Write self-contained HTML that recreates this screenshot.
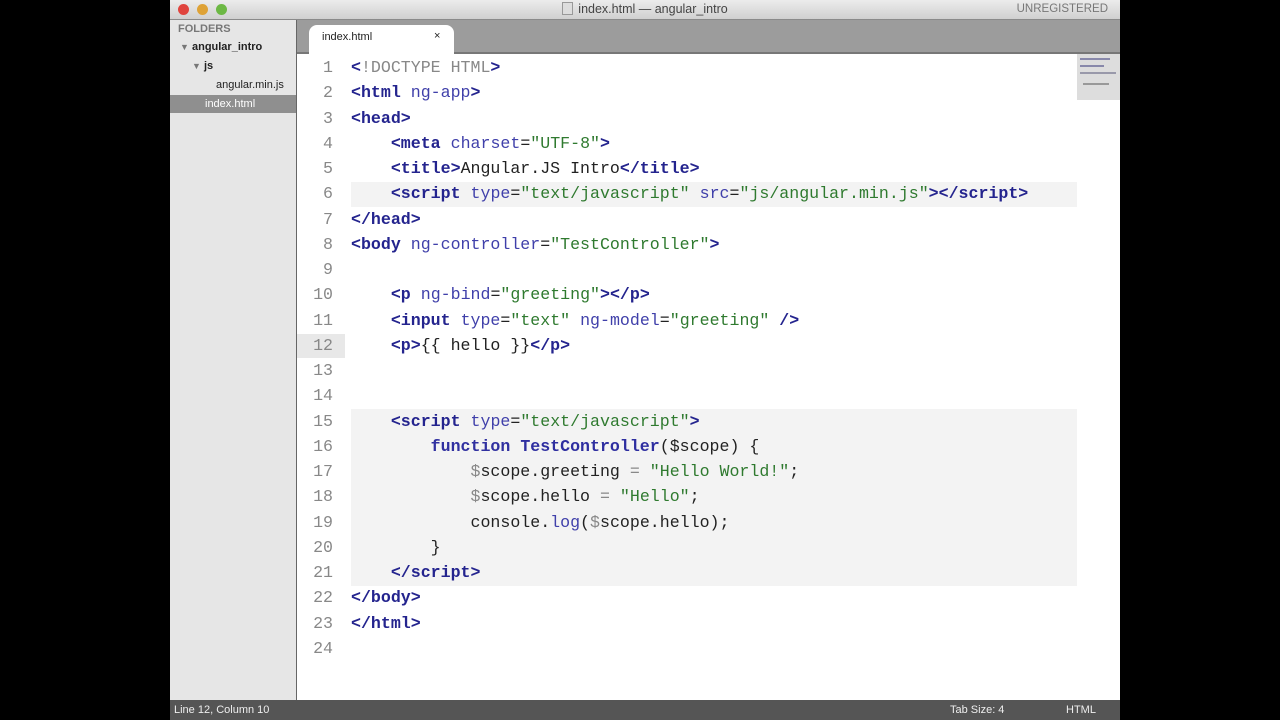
<!DOCTYPE html>
<html><head><style>
body{margin:0;width:1280px;height:720px;background:#000;position:relative;overflow:hidden;font-family:"Liberation Sans",sans-serif}
.win{position:absolute;left:170px;top:0;width:950px;height:720px;background:#fff;overflow:hidden}
.title{position:absolute;left:0;top:0;width:950px;height:19px;background:linear-gradient(#ececec,#d0d0d0);border-bottom:1px solid #8a8a8a;font-size:12.5px;color:#444;text-align:center;line-height:19px}
.dot{position:absolute;top:4px;width:11px;height:11px;border-radius:50%}
.side{position:absolute;left:0;top:20px;width:126px;height:680px;background:#e6e6e6;border-right:1px solid #666;font-size:11px;color:#222}
.side div{position:absolute;white-space:nowrap}
.tabbar{position:absolute;left:127px;top:20px;width:823px;height:32px;background:#9c9c9c;border-bottom:2px solid #777}
.tab{position:absolute;left:12px;top:5px;width:145px;height:29px;background:#fff;border-radius:8px 8px 0 0;font-size:11px;color:#222}
.code{position:absolute;left:127px;top:55px;width:823px;height:645px;font-family:"Liberation Mono",monospace;font-size:16.6px}
.ln{position:absolute;left:0;width:36px;text-align:right;color:#888;height:25.26px;line-height:25.26px}
.tx{position:absolute;left:54px;white-space:pre;height:25.26px;line-height:25.26px;color:#222}
.t{color:#24248e;font-weight:bold}.a{color:#4040aa}.s{color:#2f7a2f}.k{color:#3030a0;font-weight:bold}.f{color:#2e2ea0;font-weight:bold}.o{color:#888}
.status{position:absolute;left:0;top:700px;width:950px;height:20px;background:#555;color:#eee;font-size:11px;line-height:20px}
</style></head><body>
<div class="win">
<div class="title"><span class="dot" style="left:8px;background:#e0443e"></span><span class="dot" style="left:27px;background:#dea236"></span><span class="dot" style="left:46px;background:#6cb844"></span>
<span style="display:inline-block;width:9px;height:11px;background:#ddd;border:1px solid #999;vertical-align:-2px;margin-right:5px"></span>index.html — angular_intro
<span style="position:absolute;right:12px;top:0;color:#777;font-size:11.5px">UNREGISTERED</span></div>
<div class="side">
<div style="left:8px;top:3px;color:#777;font-weight:bold;font-size:11px">FOLDERS</div>
<div style="left:10px;top:21px;font-weight:bold"><span style="color:#777;font-size:9px">▼</span> angular_intro</div>
<div style="left:22px;top:40px;font-weight:bold"><span style="color:#777;font-size:9px">▼</span> js</div>
<div style="left:46px;top:59px">angular.min.js</div>
<div style="left:0;top:75px;width:126px;height:18px;background:#8f8f8f;color:#fff;line-height:18px;padding-left:35px;box-sizing:border-box">index.html</div>
</div>
<div class="tabbar"><div class="tab"><span style="position:absolute;left:13px;top:6px">index.html</span><span style="position:absolute;left:125px;top:5px">×</span></div></div>
<div class="code">
<div style="position:absolute;left:54px;top:127px;width:726px;height:25px;background:#f3f3f3"></div>
<div style="position:absolute;left:0;top:279px;width:48px;height:24px;background:#e8e8e8"></div>
<div style="position:absolute;left:54px;top:354px;width:726px;height:177px;background:#f3f3f3"></div>
<div style="position:absolute;left:780px;top:-1px;width:43px;height:46px;background:#ddd"></div>
<div style="position:absolute;left:783px;top:3px;width:30px;height:2px;background:#88a"></div>
<div style="position:absolute;left:783px;top:10px;width:24px;height:2px;background:#88a"></div>
<div style="position:absolute;left:783px;top:17px;width:36px;height:2px;background:#99a"></div>
<div style="position:absolute;left:786px;top:28px;width:26px;height:2px;background:#999"></div>
<div id="c"></div>
</div>
<div class="status"><span style="position:absolute;left:4px">Line 12, Column 10</span><span style="position:absolute;left:780px">Tab Size: 4</span><span style="position:absolute;left:896px">HTML</span></div>
</div>
<script>
var L=[
'<span class="t">&lt;</span><span class="o">!DOCTYPE HTML</span><span class="t">&gt;</span>',
'<span class="t">&lt;html</span> <span class="a">ng-app</span><span class="t">&gt;</span>',
'<span class="t">&lt;head&gt;</span>',
'    <span class="t">&lt;meta</span> <span class="a">charset</span>=<span class="s">"UTF-8"</span><span class="t">&gt;</span>',
'    <span class="t">&lt;title&gt;</span>Angular.JS Intro<span class="t">&lt;/title&gt;</span>',
'    <span class="t">&lt;script</span> <span class="a">type</span>=<span class="s">"text/javascript"</span> <span class="a">src</span>=<span class="s">"js/angular.min.js"</span><span class="t">&gt;&lt;/script&gt;</span>',
'<span class="t">&lt;/head&gt;</span>',
'<span class="t">&lt;body</span> <span class="a">ng-controller</span>=<span class="s">"TestController"</span><span class="t">&gt;</span>',
'',
'    <span class="t">&lt;p</span> <span class="a">ng-bind</span>=<span class="s">"greeting"</span><span class="t">&gt;&lt;/p&gt;</span>',
'    <span class="t">&lt;input</span> <span class="a">type</span>=<span class="s">"text"</span> <span class="a">ng-model</span>=<span class="s">"greeting"</span> <span class="t">/&gt;</span>',
'    <span class="t">&lt;p&gt;</span>{{ hello }}<span class="t">&lt;/p&gt;</span>',
'','',
'    <span class="t">&lt;script</span> <span class="a">type</span>=<span class="s">"text/javascript"</span><span class="t">&gt;</span>',
'        <span class="k">function</span> <span class="f">TestController</span>($scope) {',
'            <span class="o">$</span>scope.greeting <span class="o">=</span> <span class="s">"Hello World!"</span>;',
'            <span class="o">$</span>scope.hello <span class="o">=</span> <span class="s">"Hello"</span>;',
'            console.<span class="a">log</span>(<span class="o">$</span>scope.hello);',
'        }',
'    <span class="t">&lt;/script&gt;</span>',
'<span class="t">&lt;/body&gt;</span>',
'<span class="t">&lt;/html&gt;</span>',
''];
var h='';for(var i=0;i<L.length;i++){var y=(i*25.26).toFixed(2);h+='<div class="ln" style="top:'+y+'px">'+(i+1)+'</div><div class="tx" style="top:'+y+'px">'+L[i]+'</div>';}
document.getElementById('c').innerHTML=h;
</script>
</body></html>
